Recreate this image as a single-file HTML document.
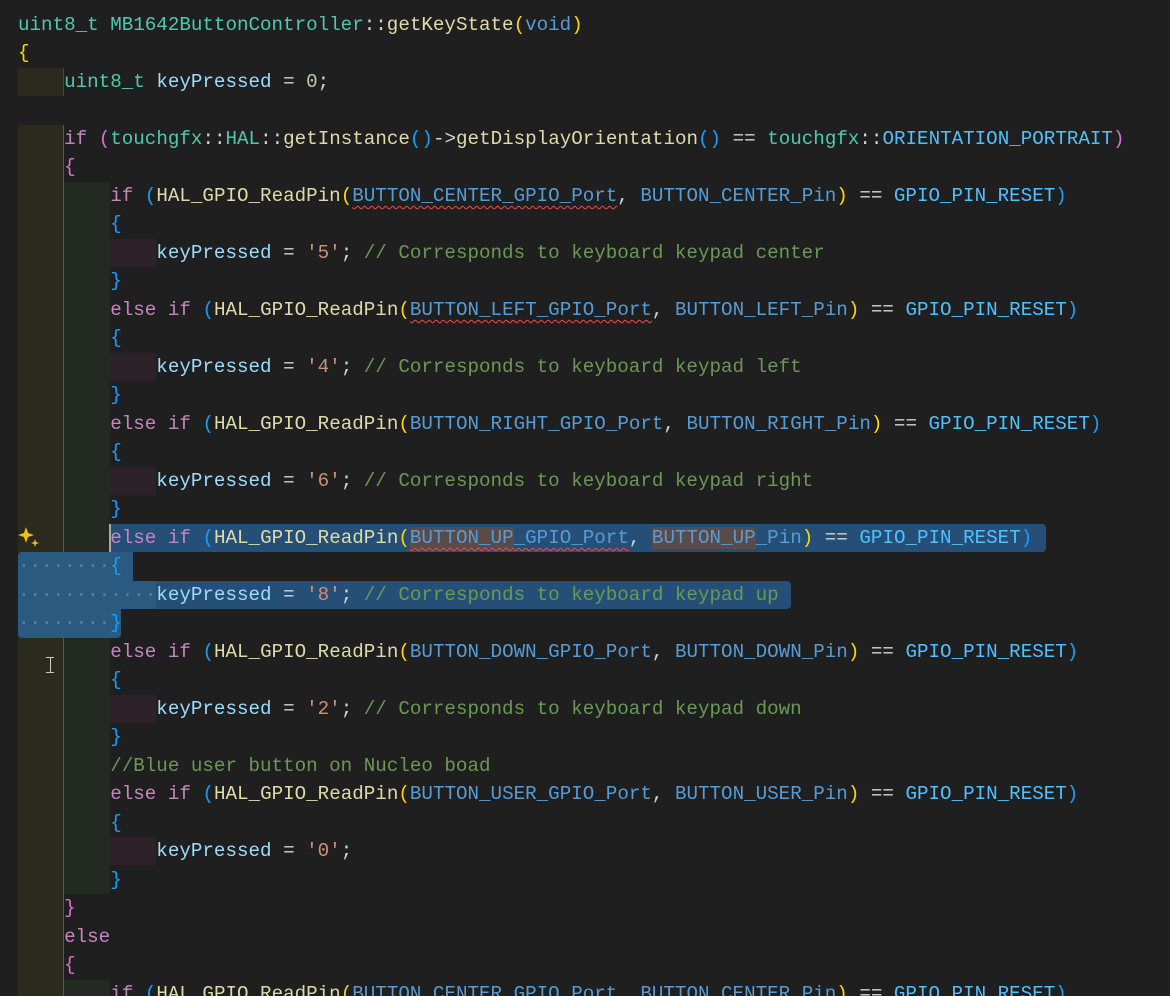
<!DOCTYPE html>
<html><head><meta charset="utf-8"><style>
html,body{margin:0;padding:0;background:#1f1f1f;width:1170px;height:996px;overflow:hidden;position:relative}
.l{position:absolute;left:18px;height:28.5px;line-height:28.5px;font-family:"Liberation Mono",monospace;font-size:19.22px;color:#d4d4d4;white-space:pre}
.r{position:absolute}
.t{color:#4ec9b0}.v{color:#9cdcfe}.f{color:#dcdcaa}.k{color:#c586c0}.m{color:#569cd6}.c{color:#4fc1ff}.s{color:#ce9178}.n{color:#b5cea8}.cm{color:#6a9955}
.b1{color:#ffd700}.b2{color:#da70d6}.b3{color:#179fff}
.sq{text-decoration:underline wavy #f14c4c;text-decoration-thickness:1px;text-underline-offset:4px}
.hl{background:#5a4a48}
.d{position:absolute;height:28.5px;line-height:28.5px;font-family:"Liberation Mono",monospace;font-size:19.22px;color:#5d7f9e;white-space:pre}
</style></head><body>
<div class="r" style="left:18px;top:67.75px;width:46px;height:28.5px;background:#2a2a1f"></div>
<div class="r" style="left:18px;top:124.75px;width:46px;height:871px;background:#2a2a1f"></div>
<div class="r" style="left:64px;top:181.75px;width:46px;height:712.5px;background:#222a22"></div>
<div class="r" style="left:64px;top:979.75px;width:46px;height:28.5px;background:#222a22"></div>
<div class="r" style="left:110px;top:238.75px;width:46px;height:28.5px;background:#2d2227"></div>
<div class="r" style="left:110px;top:352.75px;width:46px;height:28.5px;background:#2d2227"></div>
<div class="r" style="left:110px;top:466.75px;width:46px;height:28.5px;background:#2d2227"></div>
<div class="r" style="left:110px;top:694.75px;width:46px;height:28.5px;background:#2d2227"></div>
<div class="r" style="left:110px;top:836.75px;width:46px;height:28.5px;background:#2d2227"></div>
<div class="r" style="left:63px;top:124.75px;width:1px;height:871px;background:#5a5a4a"></div>
<div class="r" style="left:63px;top:67.75px;width:1px;height:28.5px;background:#4a4a3a"></div>
<div class="r" style="left:110px;top:523.75px;width:936px;height:28.5px;background:#264f78;border-radius:0 4px 4px 0"></div>
<div class="r" style="left:18px;top:552.25px;width:115px;height:28.5px;background:#2a5a80;border-radius:4px 0 0 0"></div>
<div class="r" style="left:18px;top:580.75px;width:773px;height:28.5px;background:#264f78;border-radius:0 4px 4px 0"></div>
<div class="r" style="left:18px;top:580.75px;width:138px;height:28.5px;background:#2a5a80"></div>
<div class="r" style="left:18px;top:609.25px;width:103px;height:28.5px;background:#2a5a80;border-radius:0 0 4px 4px"></div>
<div class="r" style="left:109px;top:523.75px;width:2px;height:28.5px;background:#aaa"></div>
<div class="d" style="left:18px;top:552.25px">········</div>
<div class="d" style="left:18px;top:580.75px">············</div>
<div class="d" style="left:18px;top:609.25px">········</div>
<svg class="r" style="left:18px;top:526px" width="24" height="24" viewBox="0 0 24 24"><path d="M8 1 L10 7 L16 9 L10 11 L8 17 L6 11 L0 9 L6 7Z" fill="#f4c20d"/><path d="M17 13 L18 16 L21 17 L18 18 L17 21 L16 18 L13 17 L16 16Z" fill="#f4c20d"/></svg>
<div class="r" style="left:46px;top:657px;width:8px;height:16px;border-top:1px solid #ccc;border-bottom:1px solid #ccc;box-sizing:border-box"></div>
<div class="r" style="left:50px;top:657px;width:1px;height:16px;background:#ccc"></div>

<div class="l" style="top:10.75px"><span class="t">uint8_t</span> <span class="t">MB1642ButtonController</span>::<span class="f">getKeyState</span><span class="b1">(</span><span class="m">void</span><span class="b1">)</span></div>
<div class="l" style="top:39.25px"><span class="b1">{</span></div>
<div class="l" style="top:67.75px">    <span class="t">uint8_t</span> <span class="v">keyPressed</span> = <span class="n">0</span>;</div>
<div class="l" style="top:124.75px">    <span class="k">if</span> <span class="b2">(</span><span class="t">touchgfx</span>::<span class="t">HAL</span>::<span class="f">getInstance</span><span class="b3">()</span>-&gt;<span class="f">getDisplayOrientation</span><span class="b3">()</span> == <span class="t">touchgfx</span>::<span class="c">ORIENTATION_PORTRAIT</span><span class="b2">)</span></div>
<div class="l" style="top:153.25px">    <span class="b2">{</span></div>
<div class="l" style="top:181.75px">        <span class="k">if</span> <span class="b3">(</span><span class="f">HAL_GPIO_ReadPin</span><span class="b1">(</span><span class="m sq">BUTTON_CENTER_GPIO_Port</span>, <span class="m">BUTTON_CENTER_Pin</span><span class="b1">)</span> == <span class="c">GPIO_PIN_RESET</span><span class="b3">)</span></div>
<div class="l" style="top:210.25px">        <span class="b3">{</span></div>
<div class="l" style="top:238.75px">            <span class="v">keyPressed</span> = <span class="s">'5'</span>; <span class="cm">// Corresponds to keyboard keypad center</span></div>
<div class="l" style="top:267.25px">        <span class="b3">}</span></div>
<div class="l" style="top:295.75px">        <span class="k">else</span> <span class="k">if</span> <span class="b3">(</span><span class="f">HAL_GPIO_ReadPin</span><span class="b1">(</span><span class="m sq">BUTTON_LEFT_GPIO_Port</span>, <span class="m">BUTTON_LEFT_Pin</span><span class="b1">)</span> == <span class="c">GPIO_PIN_RESET</span><span class="b3">)</span></div>
<div class="l" style="top:324.25px">        <span class="b3">{</span></div>
<div class="l" style="top:352.75px">            <span class="v">keyPressed</span> = <span class="s">'4'</span>; <span class="cm">// Corresponds to keyboard keypad left</span></div>
<div class="l" style="top:381.25px">        <span class="b3">}</span></div>
<div class="l" style="top:409.75px">        <span class="k">else</span> <span class="k">if</span> <span class="b3">(</span><span class="f">HAL_GPIO_ReadPin</span><span class="b1">(</span><span class="m">BUTTON_RIGHT_GPIO_Port</span>, <span class="m">BUTTON_RIGHT_Pin</span><span class="b1">)</span> == <span class="c">GPIO_PIN_RESET</span><span class="b3">)</span></div>
<div class="l" style="top:438.25px">        <span class="b3">{</span></div>
<div class="l" style="top:466.75px">            <span class="v">keyPressed</span> = <span class="s">'6'</span>; <span class="cm">// Corresponds to keyboard keypad right</span></div>
<div class="l" style="top:495.25px">        <span class="b3">}</span></div>
<div class="l" style="top:523.75px">        <span class="k">else</span> <span class="k">if</span> <span class="b3">(</span><span class="f">HAL_GPIO_ReadPin</span><span class="b1">(</span><span class="m sq"><span class="hl">BUTTON_UP</span>_GPIO_Port</span>, <span class="m"><span class="hl">BUTTON_UP</span>_Pin</span><span class="b1">)</span> == <span class="c">GPIO_PIN_RESET</span><span class="b3">)</span></div>
<div class="l" style="top:552.25px">        <span class="b3">{</span></div>
<div class="l" style="top:580.75px">            <span class="v">keyPressed</span> = <span class="s">'8'</span>; <span class="cm">// Corresponds to keyboard keypad up</span></div>
<div class="l" style="top:609.25px">        <span class="b3">}</span></div>
<div class="l" style="top:637.75px">        <span class="k">else</span> <span class="k">if</span> <span class="b3">(</span><span class="f">HAL_GPIO_ReadPin</span><span class="b1">(</span><span class="m">BUTTON_DOWN_GPIO_Port</span>, <span class="m">BUTTON_DOWN_Pin</span><span class="b1">)</span> == <span class="c">GPIO_PIN_RESET</span><span class="b3">)</span></div>
<div class="l" style="top:666.25px">        <span class="b3">{</span></div>
<div class="l" style="top:694.75px">            <span class="v">keyPressed</span> = <span class="s">'2'</span>; <span class="cm">// Corresponds to keyboard keypad down</span></div>
<div class="l" style="top:723.25px">        <span class="b3">}</span></div>
<div class="l" style="top:751.75px">        <span class="cm">//Blue user button on Nucleo boad</span></div>
<div class="l" style="top:780.25px">        <span class="k">else</span> <span class="k">if</span> <span class="b3">(</span><span class="f">HAL_GPIO_ReadPin</span><span class="b1">(</span><span class="m">BUTTON_USER_GPIO_Port</span>, <span class="m">BUTTON_USER_Pin</span><span class="b1">)</span> == <span class="c">GPIO_PIN_RESET</span><span class="b3">)</span></div>
<div class="l" style="top:808.75px">        <span class="b3">{</span></div>
<div class="l" style="top:837.25px">            <span class="v">keyPressed</span> = <span class="s">'0'</span>;</div>
<div class="l" style="top:865.75px">        <span class="b3">}</span></div>
<div class="l" style="top:894.25px">    <span class="b2">}</span></div>
<div class="l" style="top:922.75px">    <span class="k">else</span></div>
<div class="l" style="top:951.25px">    <span class="b2">{</span></div>
<div class="l" style="top:979.75px">        <span class="k">if</span> <span class="b3">(</span><span class="f">HAL_GPIO_ReadPin</span><span class="b1">(</span><span class="m sq">BUTTON_CENTER_GPIO_Port</span>, <span class="m">BUTTON_CENTER_Pin</span><span class="b1">)</span> == <span class="c">GPIO_PIN_RESET</span><span class="b3">)</span></div>
</body></html>
